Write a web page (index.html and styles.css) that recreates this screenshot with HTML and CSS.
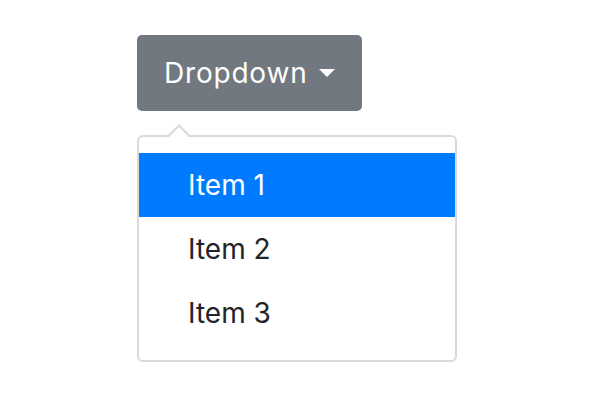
FILE: index.html
```html
<!DOCTYPE html>
<html lang="en">
<head>
  <meta charset="UTF-8" />
  <meta name="viewport" content="width=device-width, initial-scale=1.0"/>
  <title>Dropdown</title>
  <link rel="stylesheet" href="styles.css">
</head>
<body>
  <div class="dropdown">
    <button class="dropdown-toggle" type="button">Dropdown</button>

    <div class="dropdown-menu">
      <a class="dropdown-item active" href="#">Item 1</a>
      <a class="dropdown-item" href="#">Item 2</a>
      <a class="dropdown-item" href="#">Item 3</a>
    </div>
  </div>
</body>
</html>
```

FILE: styles.css
```css
body {
  margin: 0;
  background: #fff;
  font-family: Inter, "Liberation Sans", Arial, sans-serif;
}

.dropdown {
  display: flex;
  flex-direction: column;
  align-items: flex-start;
  gap: 24px;
  padding: 35px 0 0 137px;
}

.dropdown-toggle {
  display: flex;
  align-items: center;
  height: 76px;
  padding: 0 27px;
  background-color: #717880;
  color: #fff;
  border: none;
  border-radius: 5px;
  font-family: inherit;
  font-size: 28px;
  letter-spacing: 0.8px;
  cursor: pointer;
}

.dropdown-toggle::after {
  content: "";
  margin-left: 11px;
  border-top: 8.5px solid #fff;
  border-left: 8.5px solid transparent;
  border-right: 8.5px solid transparent;
}

.dropdown-menu {
  position: relative;
  box-sizing: border-box;
  width: 320px;
  padding: 16px 0 15px;
  border: 2px solid #d9d9d9;
  border-radius: 6px;
  background: #fff;
}

/* little arrow pointing at the button */
.dropdown-menu::before,
.dropdown-menu::after {
  content: "";
  position: absolute;
  border-style: solid;
  border-color: transparent;
}

.dropdown-menu::before {
  top: -13px;
  left: 29px;
  border-width: 0 11px 11px;
  border-bottom-color: #d9d9d9;
}

.dropdown-menu::after {
  top: -10px;
  left: 30px;
  border-width: 0 10px 10px;
  border-bottom-color: #fff;
}

.dropdown-item {
  display: block;
  height: 64px;
  line-height: 64px;
  padding-left: 49px;
  font-size: 28px;
  color: #212529;
  text-decoration: none;
}

.dropdown-item.active {
  background-color: #007bff;
  color: #fff;
}
```
